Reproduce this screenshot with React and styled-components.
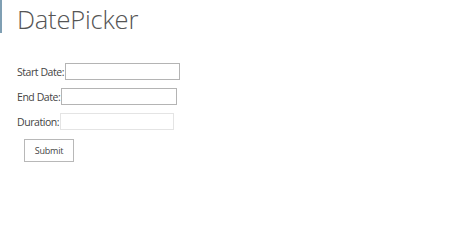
import React from "react";
import styled, { createGlobalStyle } from "styled-components";

const Global = createGlobalStyle`
  html, body { margin: 0; padding: 0; background: #fff; }
  body { font-family: "Open Sans", "Noto Sans", sans-serif; color: #333; }
`;

const Page = styled.div`
  position: relative;
  padding: 0 0 0 17px;
`;

const Accent = styled.div`
  position: absolute;
  left: 0;
  top: 0;
  width: 2px;
  height: 33px;
  background: #7f9fb3;
`;

const Title = styled.h1`
  margin: 0;
  padding-top: 1px;
  font-family: "Open Sans", sans-serif;
  font-weight: 300;
  font-size: 25.5px;
  letter-spacing: -0.2px;
  line-height: 36px;
  color: #555;
`;

const Form = styled.form`
  display: flex;
  flex-direction: column;
  gap: 8px;
  margin-top: 26px;
`;

const Row = styled.div`
  display: flex;
  align-items: center;
  gap: 1px;
`;

const Label = styled.label`
  font-family: "Open Sans", sans-serif;
  font-size: 10.5px;
  letter-spacing: -0.45px;
  color: #444;
`;

const Input = styled.input`
  box-sizing: border-box;
  width: ${(p) => p.$w}px;
  height: 17px;
  border: 1px solid ${(p) => (p.disabled ? "#e4e4e4" : "#b4b4b4")};
  background: #fff;
  margin: 0;
  padding: 0 2px;
`;

const Button = styled.button`
  box-sizing: border-box;
  margin: 1px 0 0 7px;
  width: 50px;
  height: 23px;
  background: #fff;
  border: 1px solid #b8b8b8;
  font-family: "Open Sans", sans-serif;
  font-size: 9px;
  letter-spacing: -0.2px;
  color: #444;
  align-self: flex-start;
`;

export default function App() {
  return (
    <Page>
      <Global />
      <Accent />
      <Title>DatePicker</Title>
      <Form onSubmit={(e) => e.preventDefault()}>
        <Row>
          <Label>Start Date:</Label>
          <Input $w={115} />
        </Row>
        <Row>
          <Label>End Date:</Label>
          <Input $w={116} />
        </Row>
        <Row>
          <Label>Duration:</Label>
          <Input $w={114} disabled />
        </Row>
        <Button type="submit">Submit</Button>
      </Form>
    </Page>
  );
}
